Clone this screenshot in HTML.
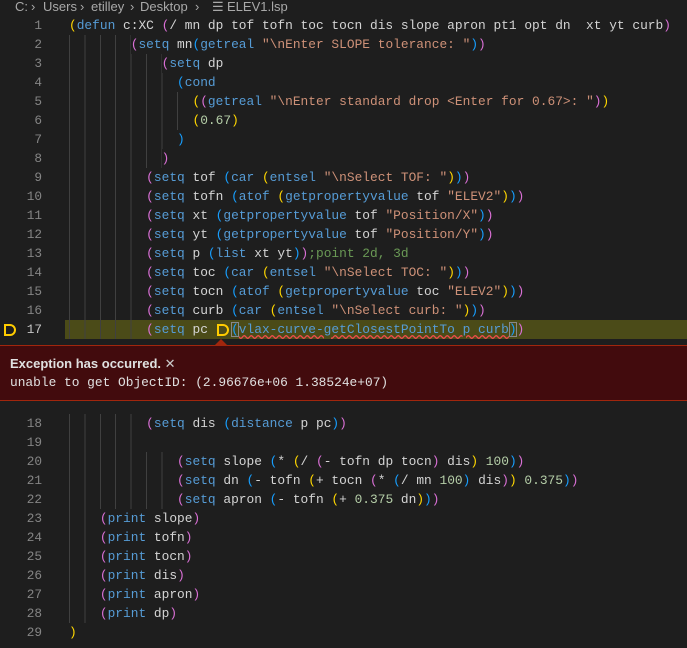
<!DOCTYPE html>
<html><head><meta charset="utf-8"><style>
body{margin:0;width:687px;height:648px;background:#1e1e1e;overflow:hidden;position:relative;font-family:"Liberation Mono",monospace;}
.bc{position:absolute;top:-1px;font:13px "Liberation Sans",sans-serif;color:#a9a9a9;white-space:pre;line-height:16px}
.l{position:absolute;left:0;height:19px;width:687px;line-height:19px;font-size:12.86px;color:#d4d4d4;white-space:pre}
.n{position:absolute;left:0;width:42px;text-align:right;color:#858585;font-size:12.75px}
.t{position:absolute;left:69px}
.g{position:absolute;left:69px;top:0;height:19px;background:repeating-linear-gradient(to right,#404040 0 1px,transparent 1px 15.4px)}
.k{color:#569cd6}.s{color:#ce9178}.nu{color:#b5cea8}.c{color:#6a9955}
.y{color:#ffd700}.p{color:#da70d6}.b{color:#179fff}
</style></head><body>
<div class="bc" style="left:15px">C:</div><div class="bc" style="left:31px">›</div>
<div class="bc" style="left:43px">Users</div><div class="bc" style="left:80px">›</div>
<div class="bc" style="left:91px">etilley</div><div class="bc" style="left:130px">›</div>
<div class="bc" style="left:140px">Desktop</div><div class="bc" style="left:195px">›</div>
<div class="bc" style="left:212px">☰</div><div class="bc" style="left:227px">ELEV1.lsp</div>

<div class="l" style="top:16px"><span class="n">1</span><span class="t"><span class="y">(</span><span class="k">defun</span> c:XC <span class="p">(</span>/ mn dp tof tofn toc tocn dis slope apron pt1 opt dn  xt yt curb<span class="p">)</span></span></div>
<div class="l" style="top:35px"><span class="n">2</span><span class="g" style="width:62px"></span><span class="t">        <span class="p">(</span><span class="k">setq</span> mn<span class="b">(</span><span class="k">getreal</span> <span class="s">"\nEnter SLOPE tolerance: "</span><span class="b">)</span><span class="p">)</span></span></div>
<div class="l" style="top:54px"><span class="n">3</span><span class="g" style="width:93px"></span><span class="t">            <span class="p">(</span><span class="k">setq</span> dp</span></div>
<div class="l" style="top:73px"><span class="n">4</span><span class="g" style="width:108px"></span><span class="t">              <span class="b">(</span><span class="k">cond</span></span></div>
<div class="l" style="top:92px"><span class="n">5</span><span class="g" style="width:123px"></span><span class="t">                <span class="y">(</span><span class="p">(</span><span class="k">getreal</span> <span class="s">"\nEnter standard drop &lt;Enter for 0.67&gt;: "</span><span class="p">)</span><span class="y">)</span></span></div>
<div class="l" style="top:111px"><span class="n">6</span><span class="g" style="width:123px"></span><span class="t">                <span class="y">(</span><span class="nu">0.67</span><span class="y">)</span></span></div>
<div class="l" style="top:130px"><span class="n">7</span><span class="g" style="width:108px"></span><span class="t">              <span class="b">)</span></span></div>
<div class="l" style="top:149px"><span class="n">8</span><span class="g" style="width:93px"></span><span class="t">            <span class="p">)</span></span></div>
<div class="l" style="top:168px"><span class="n">9</span><span class="g" style="width:77px"></span><span class="t">          <span class="p">(</span><span class="k">setq</span> tof <span class="b">(</span><span class="k">car</span> <span class="y">(</span><span class="k">entsel</span> <span class="s">"\nSelect TOF: "</span><span class="y">)</span><span class="b">)</span><span class="p">)</span></span></div>
<div class="l" style="top:187px"><span class="n">10</span><span class="g" style="width:77px"></span><span class="t">          <span class="p">(</span><span class="k">setq</span> tofn <span class="b">(</span><span class="k">atof</span> <span class="y">(</span><span class="k">getpropertyvalue</span> tof <span class="s">"ELEV2"</span><span class="y">)</span><span class="b">)</span><span class="p">)</span></span></div>
<div class="l" style="top:206px"><span class="n">11</span><span class="g" style="width:77px"></span><span class="t">          <span class="p">(</span><span class="k">setq</span> xt <span class="b">(</span><span class="k">getpropertyvalue</span> tof <span class="s">"Position/X"</span><span class="b">)</span><span class="p">)</span></span></div>
<div class="l" style="top:225px"><span class="n">12</span><span class="g" style="width:77px"></span><span class="t">          <span class="p">(</span><span class="k">setq</span> yt <span class="b">(</span><span class="k">getpropertyvalue</span> tof <span class="s">"Position/Y"</span><span class="b">)</span><span class="p">)</span></span></div>
<div class="l" style="top:244px"><span class="n">13</span><span class="g" style="width:77px"></span><span class="t">          <span class="p">(</span><span class="k">setq</span> p <span class="b">(</span><span class="k">list</span> xt yt<span class="b">)</span><span class="p">)</span><span class="c">;point 2d, 3d</span></span></div>
<div class="l" style="top:263px"><span class="n">14</span><span class="g" style="width:77px"></span><span class="t">          <span class="p">(</span><span class="k">setq</span> toc <span class="b">(</span><span class="k">car</span> <span class="y">(</span><span class="k">entsel</span> <span class="s">"\nSelect TOC: "</span><span class="y">)</span><span class="b">)</span><span class="p">)</span></span></div>
<div class="l" style="top:282px"><span class="n">15</span><span class="g" style="width:77px"></span><span class="t">          <span class="p">(</span><span class="k">setq</span> tocn <span class="b">(</span><span class="k">atof</span> <span class="y">(</span><span class="k">getpropertyvalue</span> toc <span class="s">"ELEV2"</span><span class="y">)</span><span class="b">)</span><span class="p">)</span></span></div>
<div class="l" style="top:301px"><span class="n">16</span><span class="g" style="width:77px"></span><span class="t">          <span class="p">(</span><span class="k">setq</span> curb <span class="b">(</span><span class="k">car</span> <span class="y">(</span><span class="k">entsel</span> <span class="s">"\nSelect curb: "</span><span class="y">)</span><span class="b">)</span><span class="p">)</span></span></div>
<div class="l" style="top:320px;"><div style="position:absolute;left:65px;right:0;top:0;bottom:0;background:#4b4b18"></div><svg style="position:absolute;left:3px;top:3px" width="14" height="14"><path d="M2 2h5a5 5 0 0 1 0 10H2z" fill="none" stroke="#ffcc00" stroke-width="2"/></svg><span class="n" style="color:#c6c6c6">17</span><span class="g" style="width:77px"></span><span class="t">          <span class="p">(</span><span class="k">setq</span> pc   <span class="b" style="outline:1px solid #888;outline-offset:-1px">(</span><span class="k" style="text-decoration:underline wavy #f14c4c">vlax-curve-getClosestPointTo p curb</span><span class="b" style="outline:1px solid #888;outline-offset:-1px">)</span><span class="p">)</span></span><svg style="position:absolute;left:216px;top:3px" width="14" height="14"><path d="M2 2h5a5 5 0 0 1 0 10H2z" fill="none" stroke="#ffcc00" stroke-width="2"/></svg></div>

<div style="position:absolute;left:0;top:345px;width:687px;height:54px;background:#420b0d;border-top:1px solid #a1260d;border-bottom:1px solid #a1260d"></div>
<div style="position:absolute;left:215px;top:339px;width:0;height:0;border-left:6px solid transparent;border-right:6px solid transparent;border-bottom:6px solid #a1260d"></div>
<div style="position:absolute;left:10px;top:356px;font:bold 13px 'Liberation Sans',sans-serif;color:#e0e0e0">Exception has occurred. <span style="font-weight:normal;color:#ccc">✕</span></div>
<div style="position:absolute;left:10px;top:375px;font-size:12.86px;color:#e0e0e0;white-space:pre">unable to get ObjectID: (2.96676e+06 1.38524e+07)</div>

<div class="l" style="top:414px"><span class="n">18</span><span class="g" style="width:77px"></span><span class="t">          <span class="p">(</span><span class="k">setq</span> dis <span class="b">(</span><span class="k">distance</span> p pc<span class="b">)</span><span class="p">)</span></span></div>
<div class="l" style="top:433px"><span class="n">19</span><span class="g" style="width:77px"></span></div>
<div class="l" style="top:452px"><span class="n">20</span><span class="g" style="width:108px"></span><span class="t">              <span class="p">(</span><span class="k">setq</span> slope <span class="b">(</span>* <span class="y">(</span>/ <span class="p">(</span>- tofn dp tocn<span class="p">)</span> dis<span class="y">)</span> <span class="nu">100</span><span class="b">)</span><span class="p">)</span></span></div>
<div class="l" style="top:471px"><span class="n">21</span><span class="g" style="width:108px"></span><span class="t">              <span class="p">(</span><span class="k">setq</span> dn <span class="b">(</span>- tofn <span class="y">(</span>+ tocn <span class="p">(</span>* <span class="b">(</span>/ mn <span class="nu">100</span><span class="b">)</span> dis<span class="p">)</span><span class="y">)</span> <span class="nu">0.375</span><span class="b">)</span><span class="p">)</span></span></div>
<div class="l" style="top:490px"><span class="n">22</span><span class="g" style="width:108px"></span><span class="t">              <span class="p">(</span><span class="k">setq</span> apron <span class="b">(</span>- tofn <span class="y">(</span>+ <span class="nu">0.375</span> dn<span class="y">)</span><span class="b">)</span><span class="p">)</span></span></div>
<div class="l" style="top:509px"><span class="n">23</span><span class="g" style="width:31px"></span><span class="t">    <span class="p">(</span><span class="k">print</span> slope<span class="p">)</span></span></div>
<div class="l" style="top:528px"><span class="n">24</span><span class="g" style="width:31px"></span><span class="t">    <span class="p">(</span><span class="k">print</span> tofn<span class="p">)</span></span></div>
<div class="l" style="top:547px"><span class="n">25</span><span class="g" style="width:31px"></span><span class="t">    <span class="p">(</span><span class="k">print</span> tocn<span class="p">)</span></span></div>
<div class="l" style="top:566px"><span class="n">26</span><span class="g" style="width:31px"></span><span class="t">    <span class="p">(</span><span class="k">print</span> dis<span class="p">)</span></span></div>
<div class="l" style="top:585px"><span class="n">27</span><span class="g" style="width:31px"></span><span class="t">    <span class="p">(</span><span class="k">print</span> apron<span class="p">)</span></span></div>
<div class="l" style="top:604px"><span class="n">28</span><span class="g" style="width:31px"></span><span class="t">    <span class="p">(</span><span class="k">print</span> dp<span class="p">)</span></span></div>
<div class="l" style="top:623px"><span class="n">29</span><span class="t"><span class="y">)</span></span></div>
</body></html>
